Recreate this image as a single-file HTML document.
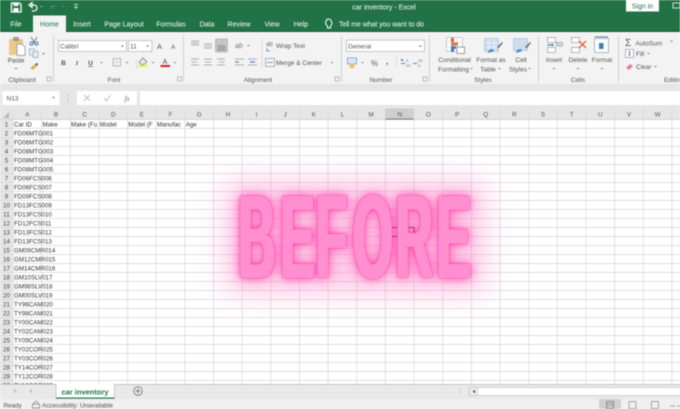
<!DOCTYPE html>
<html><head><meta charset="utf-8"><style>
html,body{margin:0;padding:0;width:680px;height:409px;overflow:hidden;background:#fff}
svg{display:block;filter:blur(.45px)}
text{font-family:"Liberation Sans",sans-serif;fill:#444}
.t{font-size:7px;fill:#fff}
.r{font-size:6.3px;fill:#444}
.c{font-size:6.2px;fill:#333}
.h{font-size:6.3px;fill:#555;text-anchor:middle}
.m{text-anchor:middle}
.l{font-size:6.4px;fill:#555;text-anchor:middle}
.g{stroke:#d6d6d6;stroke-width:.7}
.s{stroke:#d2d2d2;stroke-width:1}
.w{fill:inherit;font-weight:700;font-size:118px}
</style></head><body>
<svg width="680" height="409" viewBox="0 0 680 409" xmlns="http://www.w3.org/2000/svg">
<defs>
<filter id="b1" x="-30%" y="-80%" width="160%" height="260%"><feGaussianBlur stdDeviation="15"/></filter>
<filter id="b2" x="-20%" y="-40%" width="140%" height="180%"><feGaussianBlur stdDeviation="6"/></filter>
<filter id="b3" x="-10%" y="-20%" width="120%" height="140%"><feGaussianBlur stdDeviation="1"/></filter>
<text id="word" class="w" transform="translate(238.500 277.500) scale(.43 1)" x="0 98 180 266.500 365.600 461" y="0" stroke-width=".6">BEFORE</text>
<g id="fat"><use href="#word" x="-1.500"/><use href="#word"/><use href="#word" x="1.500"/></g>
</defs>
<!-- top -->
<rect width="680" height="32" fill="#217346"/>
<rect y="31" width="680" height="1" fill="#1b5e3a"/>
<rect x="33" y="15.5" width="33" height="17" fill="#f3f3f3"/>
<rect y="32" width="680" height="52" fill="#f3f3f3"/>
<rect y="84" width="680" height="25" fill="#e6e6e6"/>
<!-- QAT -->
<path d="M11.500 3h8l1.500 1.500v7.500h-9.500z" fill="none" stroke="#fff" stroke-width="1.300"/><rect x="13.500" y="3.500" width="5" height="2.500" fill="#fff"/><rect x="13.500" y="8" width="5" height="3.500" fill="#fff"/>
<path d="M29 5l3-2.500v5zM31 5h3a3 3 0 0 1 0 6h-2" fill="none" stroke="#fff" stroke-width="1.200"/>
<path d="M40.500 6l2 0-1 1.200z" fill="#d5e5dc"/>
<path d="M51 9a3 3 0 0 1 4-3" fill="none" stroke="#4f9270" stroke-width="1"/><path d="M62 6h3l-1.500 1.500z" fill="#4f9270"/>
<rect x="74" y="4" width="4" height="1" fill="#cfe0d6"/><path d="M74 6.500h4l-2 2.500z" fill="#cfe0d6"/>
<text class="t m" x="384" y="9.500" font-size="7">car inventory  -  Excel</text>
<rect x="626" y="0" width="33" height="11.500" fill="#fff"/><text class="m" x="642.500" y="8.500" style="font-size:7px;fill:#217346">Sign in</text>
<rect x="673" y="3" width="7" height="5" fill="none" stroke="#cfe0d6" stroke-width="1"/>
<!-- tabs -->
<text class="t m" x="16" y="26.500">File</text>
<text class="m" x="49.500" y="26.500" style="font-size:7px;fill:#217346">Home</text>
<text class="t m" x="82" y="26.500">Insert</text>
<text class="t m" x="124" y="26.500">Page Layout</text>
<text class="t m" x="171" y="26.500">Formulas</text>
<text class="t m" x="207" y="26.500">Data</text>
<text class="t m" x="239" y="26.500">Review</text>
<text class="t m" x="272" y="26.500">View</text>
<text class="t m" x="301" y="26.500">Help</text>
<path d="M328 19a4 4 0 0 1 2.500 7v2h-3v-2a4 4 0 0 1 .500-7z" fill="none" stroke="#fff" stroke-width="1"/>
<text class="t" x="339" y="26.500" textLength="85" lengthAdjust="spacingAndGlyphs">Tell me what you want to do</text>
<!-- group separators -->
<path class="s" d="M53.500 35v47M183.500 35v47M341.500 35v47M429.500 35v47M538.500 35v47M618.500 35v47"/>
<path d="M136.500 60v9M262 38v30M396.500 57v11" stroke="#dcdcdc" stroke-width="1"/>
<!-- clipboard -->
<rect x="9" y="39" width="14" height="16" rx="1" fill="#ecc98a"/><rect x="13" y="37" width="6" height="4" fill="#9b9b9b"/><path d="M17 44h5l3 3v8.500h-8z" fill="#fff" stroke="#888" stroke-width=".7"/>
<text class="m" x="16" y="62.500" style="font-size:6.500px;fill:#444">Paste</text><path d="M14.500 68h3l-1.500 1.500z" fill="#777"/>
<path d="M31 37l5 8M37 37l-5 8" stroke="#6e7f93" stroke-width="1" fill="none"/><circle cx="31.500" cy="43.500" r="1.600" fill="none" stroke="#4f7ea8"/><circle cx="36.500" cy="43.500" r="1.600" fill="none" stroke="#4f7ea8"/>
<rect x="29.500" y="49" width="5" height="6" fill="#e8eef4" stroke="#8ea6bb" stroke-width=".7"/><rect x="33" y="51.500" width="5" height="6" fill="#e8eef4" stroke="#8ea6bb" stroke-width=".7"/><path d="M42 53h3l-1.500 1.500z" fill="#777"/>
<path d="M30 68l5-4 2 2-4 4z" fill="#e0b060"/><path d="M35 64l2-1 1 1-1 2z" fill="#555"/>
<text class="l" x="22" y="82">Clipboard</text>
<rect x="47" y="77" width="4" height="4" fill="none" stroke="#999" stroke-width=".6"/>
<!-- font -->
<rect x="58.500" y="40.500" width="68" height="11" fill="#fff" stroke="#bbb" stroke-width=".8"/>
<text x="60" y="48.500" style="font-size:6.500px;fill:#555">Calibri</text><path d="M121 45.500h3l-1.500 1.500z" fill="#666"/>
<rect x="128.500" y="40.500" width="23.500" height="11" fill="#fff" stroke="#bbb" stroke-width=".8"/>
<text x="130" y="48.500" style="font-size:6.500px;fill:#555">11</text><path d="M146 45.500h3l-1.500 1.500z" fill="#666"/>
<text x="157" y="49" style="font-size:7.500px;fill:#555">A</text><text x="171" y="49" style="font-size:6.500px;fill:#555">A</text>
<text class="m" x="63.500" y="65" style="font-size:6.500px;font-weight:700;fill:#555">B</text><text class="m" x="77" y="65" style="font-size:6.500px;font-style:italic;font-family:'Liberation Serif',serif;font-weight:700;fill:#555">I</text><text class="m" x="90.500" y="65" style="font-size:6.500px;font-weight:700;fill:#555;text-decoration:underline">U</text>
<path d="M100 62h3l-1.500 1.500z" fill="#888"/>
<rect x="113" y="58.500" width="7.500" height="7.500" fill="none" stroke="#aaa" stroke-width=".8"/><path d="M116.700 58.500v7.500M113 62.200h7.500" stroke="#ccc" stroke-width=".6"/><path d="M125.500 62h3l-1.500 1.500z" fill="#888"/>
<path d="M139 62l4-4 4 4-3.500 2.500h-2z" fill="#e8e8e8" stroke="#777" stroke-width=".7"/><rect x="138" y="65" width="9.500" height="2" fill="#f2ea3e"/><path d="M151.500 62h3l-1.500 1.500z" fill="#888"/>
<text class="m" x="165" y="64" style="font-size:7px;fill:#555">A</text><rect x="160.500" y="65" width="9.500" height="2" fill="#d81f26"/><path d="M173.500 62h3l-1.500 1.500z" fill="#888"/>
<text class="l" x="114" y="82">Font</text>
<rect x="177.500" y="77" width="4" height="4" fill="none" stroke="#999" stroke-width=".6"/>
<!-- alignment -->
<g stroke="#9a9a9a" stroke-width=".8" fill="none">
<path d="M191 41h8M191 43h8M191 45h8"/><path d="M204 44h8M204 46h8M204 48h8"/><path d="M191 59h8M191 62h6M191 65h8"/><path d="M204 59h8M205 62h6M204 65h8"/><path d="M217 59h8M219 62h6M217 65h8"/>
</g>
<rect x="215.500" y="39" width="12" height="13" fill="#c6c6c6" stroke="#a8a8a8" stroke-width=".6"/><path d="M217.500 46h8M217.500 48h8M217.500 50h8" stroke="#777" stroke-width=".8"/>
<text x="235" y="48" style="font-size:7px;fill:#777;font-style:italic">ab</text><path d="M247 45h3l-1.500 1.500z" fill="#888"/>
<path d="M235 59h9M235 65h9" stroke="#999" stroke-width=".7"/><path d="M235 62h4" stroke="#4f86c6" stroke-width="1.200"/>
<path d="M248 59h9M248 65h9" stroke="#999" stroke-width=".7"/><path d="M250 62h5" stroke="#4f86c6" stroke-width="1.200"/>
<text x="266" y="46" style="font-size:6px;fill:#666">ab</text><path d="M267 48v3h3" fill="none" stroke="#3b7ec2" stroke-width=".8"/>
<text x="276" y="48" style="font-size:6.500px;fill:#555">Wrap Text</text>
<rect x="265.500" y="58.500" width="9" height="8" fill="#f5f5f5" stroke="#999" stroke-width=".7"/><path d="M267 62.500h6" stroke="#4f86c6" stroke-width=".8"/>
<text x="276" y="65" style="font-size:6.500px;fill:#555">Merge &amp; Center</text><path d="M330.500 62h3l-1.500 1.500z" fill="#888"/>
<text class="l" x="258" y="82">Alignment</text>
<rect x="335" y="77" width="4" height="4" fill="none" stroke="#999" stroke-width=".6"/>
<!-- number -->
<rect x="346.500" y="40" width="78" height="11.500" fill="#fff" stroke="#bbb" stroke-width=".8"/>
<text x="348" y="48.500" style="font-size:6.500px;fill:#555">General</text><path d="M419 45.500h3l-1.500 1.500z" fill="#666"/>
<rect x="347.500" y="58" width="9" height="6" fill="#dfe8f2" stroke="#6d93bd" stroke-width=".7"/><circle cx="352" cy="66" r="2.500" fill="#e8c162"/><path d="M361 62h3l-1.500 1.500z" fill="#888"/>
<text class="m" x="374.500" y="66" style="font-size:8px;fill:#666">%</text><text class="m" x="387" y="64" style="font-size:8px;fill:#555;font-weight:700">,</text>
<rect x="401" y="59" width="2" height="2" fill="#4f86c6"/><rect x="401" y="63" width="4" height="1" fill="#4f86c6"/><text x="405" y="62" style="font-size:4px;fill:#777">.0</text><text x="405" y="67" style="font-size:4px;fill:#777">.00</text>
<rect x="413" y="63" width="4" height="1" fill="#4f86c6"/><text x="417" y="62" style="font-size:4px;fill:#777">.00</text><text x="417" y="67" style="font-size:4px;fill:#777">.0</text>
<text class="l" x="381" y="82">Number</text>
<rect x="423" y="77" width="4" height="4" fill="none" stroke="#999" stroke-width=".6"/>
<!-- styles -->
<rect x="446.500" y="37.500" width="16" height="14" fill="#fff" stroke="#b5b5b5" stroke-width=".7"/><path d="M452 38v13M457 38v13M447 42h15M447 47h15" stroke="#ccc" stroke-width=".5"/><rect x="451" y="38" width="3" height="4" fill="#d5603a"/><rect x="451" y="42.500" width="7" height="3" fill="#e0743f"/><rect x="451" y="46" width="5" height="3" fill="#3f7dbb"/><rect x="451" y="49" width="3" height="3" fill="#3f7dbb"/>
<rect x="457" y="47" width="7.500" height="6.500" fill="#fff" stroke="#777" stroke-width=".7"/>
<rect x="484.500" y="38.500" width="14" height="13" fill="#cddcef" stroke="#a9bcd0" stroke-width=".6"/><path d="M489 39v12M494 39v12M485 43h13M485 47h13" stroke="#fff" stroke-width=".5"/><path d="M497 48l1-2 4-4 1 1-4 5z" fill="#777"/><path d="M489 50l4-1 1 2-6 2z" fill="#3e83c9"/>
<rect x="513.500" y="38.500" width="14" height="12" fill="#cddcef" stroke="#a9bcd0" stroke-width=".6"/><path d="M525 48l1-2 4-4 1 1-4 5z" fill="#777"/><path d="M517 50l4-1 1 2-6 2z" fill="#3e83c9"/>
<text class="m" x="454.500" y="62" style="font-size:6.500px;fill:#555">Conditional</text><text class="m" x="453.500" y="71.500" style="font-size:6.500px;fill:#555">Formatting</text><path d="M470 68h3l-1.500 1.500z" fill="#888"/>
<text class="m" x="491" y="62" style="font-size:6.500px;fill:#555">Format as</text><text class="m" x="488" y="71.500" style="font-size:6.500px;fill:#555">Table</text><path d="M498 68h3l-1.500 1.500z" fill="#888"/>
<text class="m" x="521" y="62" style="font-size:6.500px;fill:#555">Cell</text><text class="m" x="518" y="71.500" style="font-size:6.500px;fill:#555">Styles</text><path d="M528 68h3l-1.500 1.500z" fill="#888"/>
<text class="l" x="483" y="82">Styles</text>
<!-- cells -->
<g fill="#fff" stroke="#8c8c8c" stroke-width=".6"><rect x="547.500" y="37.500" width="8" height="5"/><rect x="547.500" y="47.500" width="8" height="5"/><rect x="556.500" y="42.500" width="6" height="3.500" fill="#cfdff0"/><rect x="571.500" y="37.500" width="8" height="5"/><rect x="571.500" y="47.500" width="8" height="5"/><rect x="594.500" y="38.500" width="14" height="14"/></g>
<path d="M547.500 45h5" stroke="#3e7dbb" stroke-width="1.200"/><path d="M552 43.500l2 1.500-2 1.500z" fill="#3e7dbb"/>
<path d="M579 41l7 7M586 41l-7 7" stroke="#d9673d" stroke-width="1.300"/>
<rect x="599" y="43" width="4.500" height="6" fill="#3e7dbb"/><path d="M595 37h13" stroke="#3e7dbb" stroke-width="1"/>
<text class="m" x="554" y="62" style="font-size:6.500px;fill:#555">Insert</text><text class="m" x="578" y="62" style="font-size:6.500px;fill:#555">Delete</text><text class="m" x="602" y="62" style="font-size:6.500px;fill:#555">Format</text>
<path d="M552.500 68h3l-1.500 1.500zM576.500 68h3l-1.500 1.500zM600.500 68h3l-1.500 1.500z" fill="#888"/>
<text class="l" x="578" y="82">Cells</text>
<!-- editing -->
<text x="625" y="46" style="font-size:10px;fill:#555">Σ</text><text x="635.500" y="45.500" style="font-size:6.500px;fill:#555">AutoSum</text><path d="M670 40.500h3l-1.500 1.500z" fill="#888"/>
<rect x="625.500" y="49.500" width="8" height="8" fill="#fff" stroke="#888" stroke-width=".6"/><path d="M629.500 51v5" stroke="#3e7dbb" stroke-width="1.200"/>
<text x="636" y="56" style="font-size:6.500px;fill:#555">Fill</text><path d="M647 53h3l-1.500 1.500z" fill="#888"/>
<path d="M626 68l4-4 3 2-4 4z" fill="#e77f93"/><text x="636" y="69" style="font-size:6.500px;fill:#555">Clear</text><path d="M654 66h3l-1.500 1.500z" fill="#888"/>
<text class="l" x="672" y="82">Editin</text>
<!-- formula bar -->
<rect x="2.500" y="91" width="57" height="14" fill="#fff"/><text x="6.500" y="100.500" style="font-size:6.500px;fill:#555">N13</text><path d="M52 97h3l-1.500 1.500z" fill="#666"/>
<circle cx="68" cy="95" r=".6" fill="#aaa"/><circle cx="68" cy="98" r=".6" fill="#aaa"/><circle cx="68" cy="101" r=".6" fill="#aaa"/>
<rect x="77" y="91" width="60" height="14" fill="#fff"/>
<path d="M84 95l6 6M90 95l-6 6" stroke="#c0c0c0" stroke-width="1"/><path d="M104 98l2.500 3 4-6" stroke="#c0c0c0" stroke-width="1" fill="none"/>
<text x="124.500" y="101" style="font-size:7px;fill:#666;font-style:italic;font-family:'Liberation Serif',serif">fx</text>
<rect x="140" y="91" width="540" height="14" fill="#fff"/>
<!-- column header -->
<rect y="108" width="680" height="11.500" fill="#e6e6e6"/>
<rect x="385" y="108.500" width="28.600" height="11" fill="#cfcfcf"/><rect x="385" y="118.700" width="28.600" height="1.100" fill="#217346"/>
<rect x="0" y="227.500" width="13" height="9" fill="#cfcfcf"/><rect x="12" y="227.500" width="1.100" height="9" fill="#217346"/>
<path d="M9 112v6h-6z" fill="#b8b8b8"/>
<text class="h" x="27.300" y="116.500">A</text><text class="h" x="56" y="116.500">B</text><text class="h" x="84.600" y="116.500">C</text><text class="h" x="113.300" y="116.500">D</text><text class="h" x="141.900" y="116.500">E</text><text class="h" x="170.600" y="116.500">F</text><text class="h" x="199.200" y="116.500">G</text><text class="h" x="227.900" y="116.500">H</text><text class="h" x="256.500" y="116.500">I</text><text class="h" x="285.200" y="116.500">J</text><text class="h" x="313.800" y="116.500">K</text><text class="h" x="342.500" y="116.500">L</text><text class="h" x="371.100" y="116.500">M</text><text class="h" x="399.800" y="116.500">N</text><text class="h" x="428.400" y="116.500">O</text><text class="h" x="457.100" y="116.500">P</text><text class="h" x="485.700" y="116.500">Q</text><text class="h" x="514.400" y="116.500">R</text><text class="h" x="543" y="116.500">S</text><text class="h" x="571.700" y="116.500">T</text><text class="h" x="600.300" y="116.500">U</text><text class="h" x="629" y="116.500">V</text><text class="h" x="657.600" y="116.500">W</text>
<rect y="119.500" width="13" height="265" fill="#e6e6e6"/>
<!-- grid -->
<path class="g" d="M41.600 109v275M70.300 109v275M98.900 109v275M127.600 109v275M156.200 109v275M184.900 109v275M213.500 109v275M242.200 109v275M270.800 109v275M299.500 109v275M328.100 109v275M356.800 109v275M385.400 109v275M414.100 109v275M442.700 109v275M471.400 109v275M500 109v275M528.700 109v275M557.300 109v275M586 109v275M614.600 109v275M643.300 109v275M671.900 109v275M13 109v275"/>
<path class="g" d="M0 128.500h680M0 137.500h680M0 146.500h680M0 155.500h680M0 164.500h680M0 173.500h680M0 182.500h680M0 191.500h680M0 200.500h680M0 209.500h680M0 218.500h680M0 227.500h680M0 236.500h680M0 245.500h680M0 254.500h680M0 263.500h680M0 272.500h680M0 281.500h680M0 290.500h680M0 299.500h680M0 308.500h680M0 317.500h680M0 326.500h680M0 335.500h680M0 344.500h680M0 353.500h680M0 362.500h680M0 371.500h680M0 380.500h680"/>
<rect y="119.300" width="680" height=".6" fill="#c4c4c4"/>
<!-- row numbers -->
<text class="r m" x="6.500" y="126.500">1</text><text class="r m" x="6.500" y="135.500">2</text><text class="r m" x="6.500" y="144.500">3</text><text class="r m" x="6.500" y="153.500">4</text><text class="r m" x="6.500" y="162.500">5</text><text class="r m" x="6.500" y="171.500">6</text><text class="r m" x="6.500" y="180.500">7</text><text class="r m" x="6.500" y="189.500">8</text><text class="r m" x="6.500" y="198.500">9</text><text class="r m" x="6.500" y="207.500">10</text><text class="r m" x="6.500" y="216.500">11</text><text class="r m" x="6.500" y="225.500">12</text><text class="r m" x="6.500" y="234.500">13</text><text class="r m" x="6.500" y="243.500">14</text><text class="r m" x="6.500" y="252.500">15</text><text class="r m" x="6.500" y="261.500">16</text><text class="r m" x="6.500" y="270.500">17</text><text class="r m" x="6.500" y="279.500">18</text><text class="r m" x="6.500" y="288.500">19</text><text class="r m" x="6.500" y="297.500">20</text><text class="r m" x="6.500" y="306.500">21</text><text class="r m" x="6.500" y="315.500">22</text><text class="r m" x="6.500" y="324.500">23</text><text class="r m" x="6.500" y="333.500">24</text><text class="r m" x="6.500" y="342.500">25</text><text class="r m" x="6.500" y="351.500">26</text><text class="r m" x="6.500" y="360.500">27</text><text class="r m" x="6.500" y="369.500">28</text><text class="r m" x="6.500" y="378.500">29</text><text class="r m" x="6.500" y="387.500">30</text>
<!-- cells text -->
<text class="c" x="14" y="126.500">Car ID</text><text class="c" x="42.500" y="126.500">Make</text><text class="c" x="71" y="126.500">Make (Fu</text><text class="c" x="99.800" y="126.500">Model</text><text class="c" x="128.300" y="126.500">Model (F</text><text class="c" x="157" y="126.500">Manufac</text><text class="c" x="185.700" y="126.500">Age</text>
<text class="c" x="14" y="135.500">FD06MTG001</text><text class="c" x="14" y="144.500">FD06MTG002</text><text class="c" x="14" y="153.500">FD08MTG003</text><text class="c" x="14" y="162.500">FD08MTG004</text><text class="c" x="14" y="171.500">FD08MTG005</text><text class="c" x="14" y="180.500">FD06FCS006</text><text class="c" x="14" y="189.500">FD06FCS007</text><text class="c" x="14" y="198.500">FD09FCS008</text><text class="c" x="14" y="207.500">FD13FCS009</text><text class="c" x="14" y="216.500">FD13FCS010</text><text class="c" x="14" y="225.500">FD12FCS011</text><text class="c" x="14" y="234.500">FD13FCS012</text><text class="c" x="14" y="243.500">FD13FCS013</text><text class="c" x="14" y="252.500">GM09CMR014</text><text class="c" x="14" y="261.500">GM12CMR015</text><text class="c" x="14" y="270.500">GM14CMR016</text><text class="c" x="14" y="279.500">GM10SLV017</text><text class="c" x="14" y="288.500">GM98SLV018</text><text class="c" x="14" y="297.500">GM00SLV019</text><text class="c" x="14" y="306.500">TY96CAM020</text><text class="c" x="14" y="315.500">TY98CAM021</text><text class="c" x="14" y="324.500">TY00CAM022</text><text class="c" x="14" y="333.500">TY02CAM023</text><text class="c" x="14" y="342.500">TY09CAM024</text><text class="c" x="14" y="351.500">TY02COR025</text><text class="c" x="14" y="360.500">TY03COR026</text><text class="c" x="14" y="369.500">TY14COR027</text><text class="c" x="14" y="378.500">TY12COR028</text><text class="c" x="14" y="387.500">TY10COR029</text>
<!-- BEFORE glow -->
<rect x="226" y="182" width="258" height="110" fill="#ff6fc0" opacity=".38" filter="url(#b1)"/>
<g fill="#ff3aa8" stroke="#ff3aa8" filter="url(#b2)" opacity=".9"><use href="#fat"/></g>
<g fill="#ff1f9c" stroke="#ff1f9c" filter="url(#b3)" opacity=".85"><use href="#fat"/></g>
<rect x="385.500" y="227.500" width="28.600" height="9" fill="none" stroke="#8a2560" stroke-width="1" opacity=".8"/>
<g fill="#ff8fcf" stroke="#ff8fcf"><use href="#fat"/></g>
<!-- bottom -->
<rect y="384" width="680" height="15" fill="#e9e9e9"/><rect y="384" width="680" height=".8" fill="#bdbdbd"/>
<rect x="56" y="384" width="58.500" height="14.500" fill="#fff"/><rect x="56" y="397.500" width="58.500" height="1.200" fill="#217346"/><path d="M56 384v14M114.500 384v14" stroke="#aaa" stroke-width=".6"/>
<text class="m" x="85" y="394.500" style="font-size:7.500px;font-weight:700;fill:#217346">car inventory</text>
<path d="M17 391l-3-2.500v5zM29 391l3-2.500v5z" fill="#c4c4c4"/>
<circle cx="138" cy="391" r="4.300" fill="none" stroke="#777" stroke-width=".8"/><path d="M135.500 391h5M138 388.500v5" stroke="#666" stroke-width=".8"/>
<circle cx="460" cy="389" r=".5" fill="#aaa"/><circle cx="460" cy="391" r=".5" fill="#aaa"/><circle cx="460" cy="393" r=".5" fill="#aaa"/>
<rect x="469.500" y="387.500" width="211" height="8" fill="#fff" stroke="#bbb" stroke-width=".6"/><rect x="469.500" y="387.500" width="8" height="8" fill="#f0f0f0" stroke="#bbb" stroke-width=".6"/><path d="M475 389.500l-2.500 2 2.500 2z" fill="#555"/>
<rect y="399" width="680" height="10" fill="#f0f0f0"/>
<text x="3.500" y="407.500" style="font-size:6.300px;fill:#555">Ready</text>
<path d="M32.500 404h7v4h-7zM34 404a2 2 0 0 1 4-1" fill="none" stroke="#777" stroke-width=".7"/>
<text x="42" y="407.500" style="font-size:6.300px;fill:#555" textLength="71" lengthAdjust="spacingAndGlyphs">Accessibility: Unavailable</text>
<rect x="599" y="399" width="22" height="10" fill="#d0d0d0"/>
<rect x="606.500" y="401.500" width="7" height="7" fill="none" stroke="#777" stroke-width=".7"/><path d="M606.500 403.500h7M606.500 405.500h7" stroke="#777" stroke-width=".5"/>
<rect x="629" y="401.500" width="7" height="7" fill="none" stroke="#888" stroke-width=".7"/><rect x="651.500" y="401.500" width="7" height="7" fill="none" stroke="#888" stroke-width=".7"/>
<path d="M670 406h5M677 406h3" stroke="#888" stroke-width=".7"/>
</svg>
</body></html>
